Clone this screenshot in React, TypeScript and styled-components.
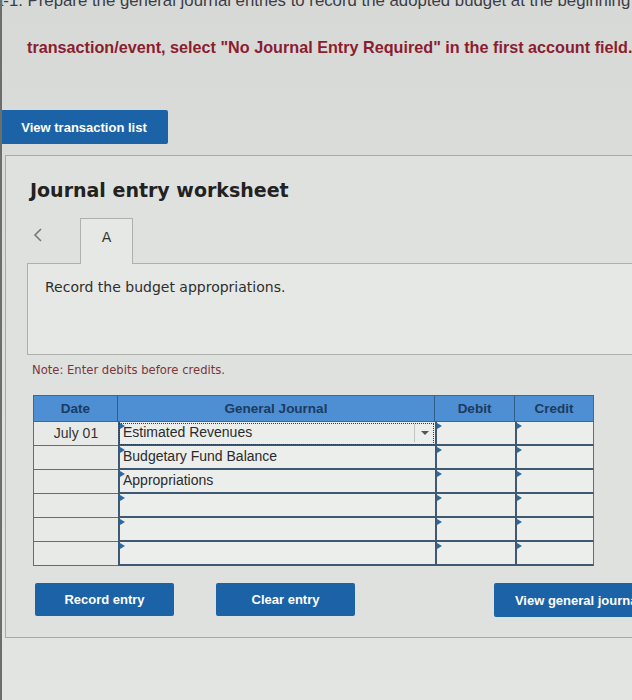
import * as React from 'react';
import styled, { createGlobalStyle } from 'styled-components';

const GlobalStyle = createGlobalStyle`
    html, body {
        margin: 0;
        padding: 0;
    }
    body {
        background: #dcdedb;
        font-family: "Liberation Sans", Arial, sans-serif;
    }
`;

interface JournalLine {
    date: string;
    account: string;
    debit: string;
    credit: string;
}

const lines: JournalLine[] = [
    { date: 'July 01', account: 'Estimated Revenues', debit: '', credit: '' },
    { date: '', account: 'Budgetary Fund Balance', debit: '', credit: '' },
    { date: '', account: 'Appropriations', debit: '', credit: '' },
    { date: '', account: '', debit: '', credit: '' },
    { date: '', account: '', debit: '', credit: '' },
    { date: '', account: '', debit: '', credit: '' },
];

const Page = styled.div`
    width: 632px;
    height: 700px;
    box-sizing: border-box;
    overflow: hidden;
    border-left: 2px solid #6c6e6c;
    background: linear-gradient(#d7d9d6, #dfe1de 60%, #e3e5e2);
`;

const Prompt = styled.div`
    line-height: 20px;
    white-space: nowrap;
`;

const PromptLead = styled.div`
    margin-top: -9px;
    margin-left: -8px;
    font-size: 16.8px;
    color: #3c3d48;
`;

const PromptNotice = styled.div`
    margin-top: 26px;
    padding-left: 25px;
    font-size: 16.2px;
    color: #8b1d30;
    font-weight: bold;
`;

const BlueButton = styled.button<{ $wide?: boolean }>`
    width: ${p => (p.$wide ? '168px' : '139px')};
    height: ${p => (p.$wide ? '34px' : '33px')};
    padding: 0;
    border: none;
    border-radius: 2px;
    background: #1b63a6;
    color: #ffffff;
    font: bold 13px "Liberation Sans", Arial, sans-serif;
    white-space: nowrap;
    overflow: hidden;
    flex-shrink: 0;
`;

const TopBar = styled.div`
    margin-top: 53px;
    margin-left: -2px;
`;

const Panel = styled.section`
    box-sizing: border-box;
    height: 483px;
    margin: 11px 0 0 3px;
    padding-left: 21px;
    border-top: 1px solid #a8aaa7;
    border-left: 1px solid #a8aaa7;
    border-bottom: 1px solid #a8aaa7;
    background: #dfe1de;
`;

const Title = styled.h2`
    margin: 22px 0 0 3px;
    font: bold 19px/24px "DejaVu Sans", Verdana, sans-serif;
    color: #222222;
`;

const TabRow = styled.div`
    display: flex;
    align-items: flex-end;
    margin-top: 16px;
`;

const Prev = styled.div`
    width: 53px;
    height: 45px;
    padding: 10px 0 0 6px;
    box-sizing: border-box;
`;

const Tab = styled.div`
    position: relative;
    z-index: 1;
    width: 53px;
    height: 46px;
    margin-bottom: -1px;
    box-sizing: border-box;
    padding-top: 9px;
    border: 1px solid #aeb0ad;
    border-bottom: none;
    background: #e6e8e5;
    text-align: center;
    font: 14px/18px "DejaVu Sans", Verdana, sans-serif;
    color: #333333;
`;

const Prompted = styled.div`
    box-sizing: border-box;
    height: 92px;
    margin-right: -30px;
    padding: 14px 17px;
    border: 1px solid #aeb0ad;
    background: #e6e8e5;
    font: 14px/18px "DejaVu Sans", Verdana, sans-serif;
    color: #2e2e2e;
`;

const Note = styled.div`
    margin: 8px 0 0 5px;
    font: 11.6px/14px "DejaVu Sans", Verdana, sans-serif;
    color: #7a363d;
`;

const Journal = styled.div`
    display: grid;
    grid-template-columns: 85px 317px 80px 79px;
    width: 561px;
    margin: 18px 0 0 6px;
`;

const HeadCell = styled.div<{ $last?: boolean }>`
    height: 27px;
    box-sizing: border-box;
    padding-top: 5px;
    border-top: 1px solid #3b6a9a;
    border-bottom: 1px solid #3b6a9a;
    border-right: 1px solid ${p => (p.$last ? '#3b6a9a' : '#2f5f8f')};
    background: #4e8ed3;
    text-align: center;
    font: bold 13.5px/16px "Liberation Sans", Arial, sans-serif;
    color: #1b3b61;
    &:first-child {
        border-left: 1px solid #3b6a9a;
    }
`;

const DateCell = styled.div`
    height: 24px;
    box-sizing: border-box;
    border-left: 1px solid #6a6c6a;
    border-bottom: 1px solid #6a6c6a;
    background: #e8eae7;
    text-align: center;
    font: 14px/22px "Liberation Sans", Arial, sans-serif;
    color: #333333;
`;

const EntryCell = styled.div<{ $focused?: boolean; $last?: boolean }>`
    position: relative;
    display: flex;
    height: 24px;
    box-sizing: border-box;
    border-left: 2px solid #3e5a73;
    border-bottom: 2px solid #3e5a73;
    border-right: ${p => (p.$last ? '1px solid #6a6c6a' : 'none')};
    background: #eceeeb;
    font: 14px/21px "Liberation Sans", Arial, sans-serif;
    color: #2b2b2b;
    outline: ${p => (p.$focused ? '1px dotted #3a3a3a' : 'none')};
    outline-offset: -2px;

    &::before {
        content: '';
        position: absolute;
        top: 1px;
        left: 0;
        border-left: 5px solid #2c6aa5;
        border-top: 3px solid transparent;
        border-bottom: 3px solid transparent;
    }
`;

const AccountText = styled.span`
    flex: 1;
    padding-left: 3px;
    white-space: nowrap;
    overflow: hidden;
`;

const Caret = styled.span`
    display: flex;
    align-items: center;
    justify-content: center;
    width: 20px;
    margin: 2px 0;
    border-left: 1px solid #c2c4c1;

    &::after {
        content: '';
        border-top: 4px solid #555555;
        border-left: 4px solid transparent;
        border-right: 4px solid transparent;
    }
`;

const Actions = styled.div`
    display: flex;
    margin: 17px -60px 0 8px;
    gap: 42px;
`;

const Spacer = styled.div`
    width: 55px;
    flex-shrink: 0;
`;

const App: React.FC = () => {
    return (
        <Page>
            <GlobalStyle />
            <Prompt>
                <PromptLead>
                    a-1. Prepare the general journal entries to record the adopted budget at the beginning of the year. (If no entry is required for a
                </PromptLead>
                <PromptNotice>
                    transaction/event, select "No Journal Entry Required" in the first account field.)
                </PromptNotice>
            </Prompt>
            <TopBar>
                <BlueButton $wide>View transaction list</BlueButton>
            </TopBar>
            <Panel>
                <Title>Journal entry worksheet</Title>
                <TabRow>
                    <Prev>
                        <svg width="10" height="14" viewBox="0 0 10 14">
                            <polyline points="8,1 2,7 8,13" fill="none" stroke="#777977" strokeWidth="1.6" />
                        </svg>
                    </Prev>
                    <Tab>A</Tab>
                </TabRow>
                <Prompted>Record the budget appropriations.</Prompted>
                <Note>Note: Enter debits before credits.</Note>
                <Journal>
                    <HeadCell>Date</HeadCell>
                    <HeadCell>General Journal</HeadCell>
                    <HeadCell>Debit</HeadCell>
                    <HeadCell $last>Credit</HeadCell>
                    {lines.map((line, i) => (
                        <React.Fragment key={i}>
                            <DateCell>{line.date}</DateCell>
                            <EntryCell $focused={i === 0}>
                                <AccountText>{line.account}</AccountText>
                                {i === 0 && <Caret />}
                            </EntryCell>
                            <EntryCell>{line.debit}</EntryCell>
                            <EntryCell $last>{line.credit}</EntryCell>
                        </React.Fragment>
                    ))}
                </Journal>
                <Actions>
                    <BlueButton>Record entry</BlueButton>
                    <BlueButton>Clear entry</BlueButton>
                    <Spacer />
                    <BlueButton $wide>View general journal</BlueButton>
                </Actions>
            </Panel>
        </Page>
    );
};

export default App;
